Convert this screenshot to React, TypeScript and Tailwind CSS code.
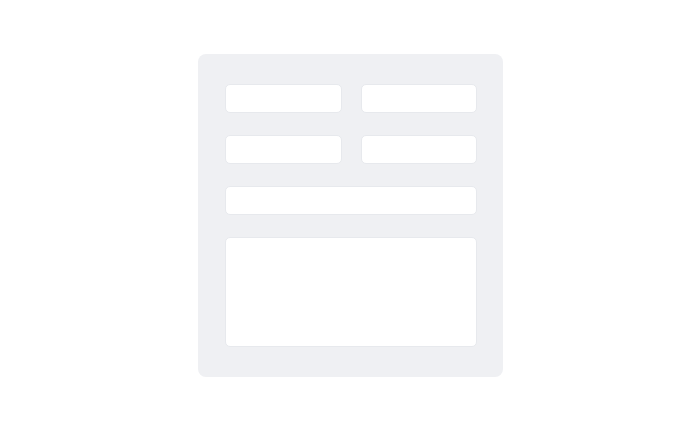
export default function App() {
  return (
    <div className="min-h-screen w-full bg-white flex items-center justify-center pl-[2px] pt-[2px]">
      <div className="w-[305px] rounded-[8px] bg-[#eff0f3] pt-[30px] pb-[30px] pl-[27px] pr-[26px]">
        <div className="grid grid-cols-2 gap-x-[19px] gap-y-[22px]">
          <div className="h-[29px] rounded-[5px] bg-white border border-[#e7e9ed]" />
          <div className="h-[29px] rounded-[5px] bg-white border border-[#e7e9ed]" />
          <div className="h-[29px] rounded-[5px] bg-white border border-[#e7e9ed]" />
          <div className="h-[29px] rounded-[5px] bg-white border border-[#e7e9ed]" />
          <div className="col-span-2 h-[29px] rounded-[5px] bg-white border border-[#e7e9ed]" />
          <div className="col-span-2 h-[110px] rounded-[5px] bg-white border border-[#e7e9ed]" />
        </div>
      </div>
    </div>
  );
}
